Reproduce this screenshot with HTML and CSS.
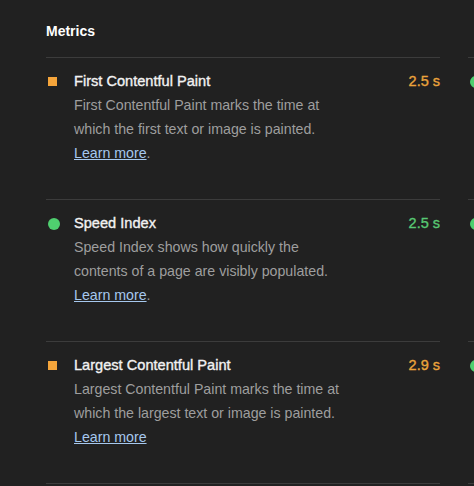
FILE: index.html
```html
<!DOCTYPE html>
<html lang="en">
<head>
<meta charset="utf-8">
<title>Metrics</title>
<link rel="stylesheet" href="styles.css">
</head>
<body>
<section class="metrics">
  <h2 class="metrics-title">Metrics</h2>
  <div class="grid">
    <div class="metric">
      <div class="metric-head">
        <span class="icon square"></span>
        <span class="metric-name">First Contentful Paint</span>
        <span class="metric-value avg">2.5 s</span>
      </div>
      <p class="metric-desc">First Contentful Paint marks the time at which the first text or image is painted. <span class="learn"><a href="#">Learn more</a>.</span></p>
    </div>
    <div class="metric">
      <div class="metric-head">
        <span class="icon circle"></span>
        <span class="metric-name">Time to Interactive</span>
        <span class="metric-value pass">3.1 s</span>
      </div>
      <p class="metric-desc">Time to interactive is the amount of time it takes for the page to become interactive. <span class="learn"><a href="#">Learn more</a>.</span></p>
    </div>
    <div class="metric">
      <div class="metric-head">
        <span class="icon circle"></span>
        <span class="metric-name">Speed Index</span>
        <span class="metric-value pass">2.5 s</span>
      </div>
      <p class="metric-desc">Speed Index shows how quickly the contents of a page are visibly populated. <span class="learn"><a href="#">Learn more</a>.</span></p>
    </div>
    <div class="metric">
      <div class="metric-head">
        <span class="icon circle"></span>
        <span class="metric-name">Total Blocking Time</span>
        <span class="metric-value pass">120 ms</span>
      </div>
      <p class="metric-desc">Sum of all time periods between FCP and Time to Interactive. <span class="learn"><a href="#">Learn more</a>.</span></p>
    </div>
    <div class="metric">
      <div class="metric-head">
        <span class="icon square"></span>
        <span class="metric-name">Largest Contentful Paint</span>
        <span class="metric-value avg">2.9 s</span>
      </div>
      <p class="metric-desc">Largest Contentful Paint marks the time at which the largest text or image is painted. <span class="learn"><a href="#">Learn more</a></span></p>
    </div>
    <div class="metric">
      <div class="metric-head">
        <span class="icon circle"></span>
        <span class="metric-name">Cumulative Layout Shift</span>
        <span class="metric-value pass">0</span>
      </div>
      <p class="metric-desc">Cumulative Layout Shift measures the movement of visible elements. <span class="learn"><a href="#">Learn more</a>.</span></p>
    </div>
  </div>
</section>
</body>
</html>
```
FILE: styles.css
```css
html, body {
  margin: 0;
  padding: 0;
  background: #212121;
  overflow: hidden;
}
body {
  font-family: "Liberation Sans", Arial, sans-serif;
  color: #e8e8e8;
}
.metrics {
  padding-left: 46px;
  width: 900px;
}
.metrics-title {
  margin: 0;
  font-size: 14px;
  font-weight: bold;
  line-height: 20px;
  padding-top: 21px;
  height: 36px;
  color: #ffffff;
}
.grid {
  display: grid;
  grid-template-columns: 394px 394px;
  column-gap: 28px;
}
.metric {
  border-top: 1px solid #3c3c3c;
  padding: 13px 0 34px 28px;
  position: relative;
}
.metric:nth-last-child(-n+2) {
  border-bottom: 1px solid #3c3c3c;
}
.metric-head {
  display: flex;
  align-items: center;
  height: 22px;
}
.icon {
  position: absolute;
  left: 2px;
  background: #f5a53b;
}
.square {
  top: 19px;
  width: 9px;
  height: 9px;
}
.circle {
  top: 18px;
  width: 12px;
  height: 12px;
  border-radius: 50%;
  background: #4fcf6f;
}
.metric-name {
  font-size: 14.6px;
  color: #f2f2f2;
  -webkit-text-stroke: 0.35px #f2f2f2;
  flex: 1;
  line-height: 20px;
  align-self: flex-start;
}
.metric-value {
  font-size: 14.5px;
  line-height: 20px;
  align-self: flex-start;
}
.metric-value.avg {
  color: #eba43c;
  -webkit-text-stroke: 0.35px #eba43c;
}
.metric-value.pass {
  color: #58c873;
  -webkit-text-stroke: 0.35px #58c873;
}
.metric-desc {
  margin: 0;
  font-size: 14.2px;
  line-height: 24px;
  color: #9e9e9e;
  max-width: 282px;
}
.learn {
  display: block;
}
.metric-desc a {
  color: #a6c8ee;
  text-decoration: underline;
}
```
